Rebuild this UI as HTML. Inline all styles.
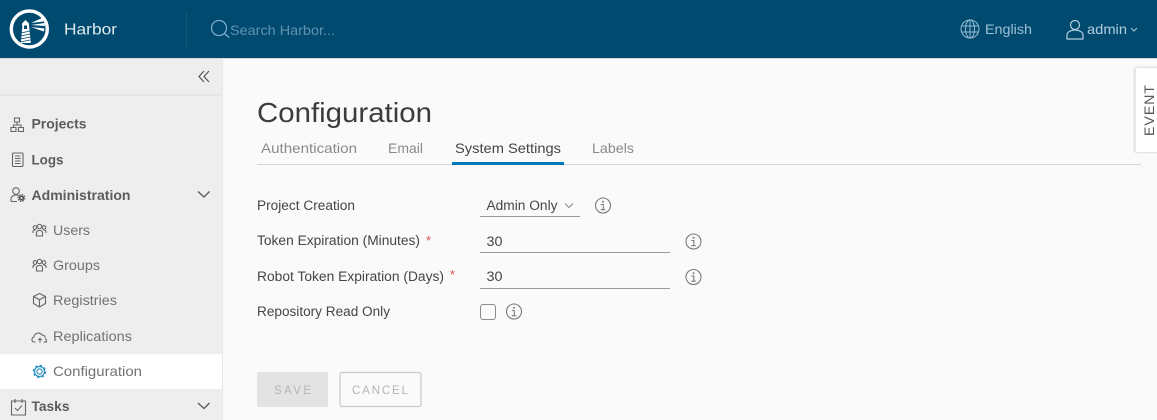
<!DOCTYPE html>
<html><head><meta charset="utf-8"><style>
html,body{margin:0;padding:0;width:1157px;height:420px;overflow:hidden;background:#fafafa}
svg{display:block;font-family:"Liberation Sans",sans-serif;filter:blur(.3px)}
.ic{fill:none;stroke:#666;stroke-width:1.1}
</style></head><body>
<svg width="1157" height="420" viewBox="0 0 1157 420" xmlns="http://www.w3.org/2000/svg">
<defs><filter id="b" x="-20%" y="-20%" width="140%" height="140%"><feGaussianBlur stdDeviation="1.2"/></filter></defs>
<rect width="1157" height="420" fill="#fafafa"/>
<!-- header -->
<rect width="1157" height="58" fill="#004a70"/>
<rect y="58" width="1157" height="1" fill="#d8d8d8"/>
<circle cx="29.300" cy="29" r="18" fill="none" stroke="#fff" stroke-width="3.400"/>
<path d="M22.500 25h6.500l1.800 18h-10z" fill="#fff"/><path d="M25.500 20l3.500 3.500v2h-7v-2z" fill="#fff"/><rect x="24" y="25.500" width="3" height="3.500" fill="#004a70"/>
<path d="M21 33l9-2M20.700 36l9.500-2M20.500 39l10-2M20.300 42l10-2" stroke="#004a70" stroke-width=".8"/>
<path d="M31 23l11-5 1.500 3.500zM31 25l13.500-2 .5 3zM31 27l13.500 1.500-.8 3z" fill="#fff"/>
<text x="64" y="34.500" font-size="16" fill="#fff" fill-opacity=".88" textLength="53" lengthAdjust="spacingAndGlyphs">Harbor</text>
<rect x="186" y="12" width="1" height="36" fill="#135879"/>
<circle cx="219" cy="28" r="7.500" fill="none" stroke="#7eb0cc" stroke-width="1.200"/><path d="M224.500 33.500l4.500 4" stroke="#7eb0cc" stroke-width="1.200"/>
<text x="230" y="35" font-size="14" fill="#5f93b0" textLength="105" lengthAdjust="spacingAndGlyphs">Search Harbor...</text>
<g fill="none" stroke="#94bbd1" stroke-width="1"><circle cx="970" cy="29" r="9"/><ellipse cx="970" cy="29" rx="4.500" ry="9"/><path d="M961.500 26h17M961.500 32h17M970 20v18"/></g>
<text x="985" y="34" font-size="14" fill="#9cc0d5" textLength="47" lengthAdjust="spacingAndGlyphs">English</text>
<g fill="none" stroke="#b5d0e0" stroke-width="1.200"><circle cx="1075" cy="25" r="4.500"/><path d="M1067 39v-4c0-3 4-5 8-5s8 2 8 5v4z"/></g>
<text x="1087" y="34" font-size="14" fill="#b0cddd" textLength="40" lengthAdjust="spacingAndGlyphs">admin</text>
<path d="M1131 28l3 3 3-3" fill="none" stroke="#a9cadd" stroke-width="1"/>
<!-- sidebar -->
<rect y="59" width="222" height="361" fill="#eeeeee"/>
<rect x="222" y="59" width="1" height="361" fill="#e8e8e8"/>
<rect y="94.500" width="222" height="1" fill="#dcdcdc"/>
<path d="M204 71l-5 5.500 5 5.500M209 71l-5 5.500 5 5.500" fill="none" stroke="#555" stroke-width="1.200"/>
<rect y="354" width="222" height="35" fill="#fff"/>
<g font-size="14" font-weight="700" fill="#5c5c5c">
<text x="31.500" y="128.500" textLength="55" lengthAdjust="spacingAndGlyphs">Projects</text>
<text x="31.500" y="164.500" textLength="32" lengthAdjust="spacingAndGlyphs">Logs</text>
<text x="31.500" y="200" textLength="99" lengthAdjust="spacingAndGlyphs">Administration</text>
<text x="31.500" y="411" textLength="38" lengthAdjust="spacingAndGlyphs">Tasks</text>
</g>
<g font-size="14" fill="#727272">
<text x="53" y="235" textLength="37" lengthAdjust="spacingAndGlyphs">Users</text>
<text x="53" y="270" textLength="47" lengthAdjust="spacingAndGlyphs">Groups</text>
<text x="53" y="305" textLength="64" lengthAdjust="spacingAndGlyphs">Registries</text>
<text x="53" y="341" textLength="79" lengthAdjust="spacingAndGlyphs">Replications</text>
<text x="53" y="376" textLength="89" lengthAdjust="spacingAndGlyphs">Configuration</text>
</g>
<!-- sidebar icons -->
<g class="ic">
<path d="M14.500 118h5v4h-5zM11 127.500h5v4h-5zM18.500 127.500h5v4h-5zM17 122v3M13.500 127.500v-2.500h7.500v2.500"/>
<rect x="12.500" y="153" width="10.500" height="13.500" rx="1"/><path d="M15 156h5.500M15 158.500h5.500M15 161h5.500M15 163.500h5.500"/>
<circle cx="16" cy="191" r="3.300"/><path d="M11 201.500v-2.500c0-2.500 2.500-4 5-4 1 0 2 .2 3 .7M11 201.500h6"/>
<path d="M198 191.500l6 5.500 5.500-5.500" stroke-width="1.300" stroke="#555"/>
<path d="M198 403l6 5.500 5.500-5.500" stroke-width="1.300" stroke="#555"/>
<path d="M11.500 401h14v14h-14zM15 399v4M22 399v4M15 408l2.500 2.500 4.500-5"/>
<g id="u"><circle cx="39.500" cy="226.500" r="2.200"/><circle cx="35" cy="227.500" r="1.800"/><circle cx="44" cy="227.500" r="1.800"/><path d="M36.500 236v-3.500c0-1 1-2 3-2s3 1 3 2v3.500zM33 233v-1.500c0-1 1-1.500 2.500-1.500M46 233v-1.500c0-1-1-1.500-2.500-1.500"/></g>
<use href="#u" y="35"/>
<path d="M39.500 293.500l6 3v7l-6 3.500-6-3.500v-7zM33.500 296.500l6 3.200 6-3.200M39.500 299.700v7"/>
<path d="M35.500 342h-1.500c-3 0-2.500-4.500 0-5 0-3 5-6 8-2 2 0 3 1 3 2.500M43.500 342h3c0-2-.5-3-1-4M39.500 342h1M40 337.500v4M38 339.500h4"/>
</g>
<g fill="none" stroke="#2f93bf"><circle cx="39.500" cy="371.500" r="2.600" stroke-width="1.200"/><circle cx="39.500" cy="371.500" r="5" stroke-width="1.200"/><circle cx="39.500" cy="371.500" r="5.900" stroke-width="1.600" stroke-dasharray="2.320 2.320"/></g>
<circle cx="21.500" cy="198" r="2.800" fill="#555"/><circle cx="21.500" cy="198" r="1" fill="#eee"/><circle cx="21.500" cy="198" r="3.500" fill="none" stroke="#555" stroke-width="1" stroke-dasharray="1.500 1.250"/>
<!-- event tab -->
<rect x="1135" y="68" width="26" height="84" fill="#000" opacity=".25" filter="url(#b)"/>
<rect x="1135.500" y="68" width="22" height="84" fill="#fff"/>
<text transform="translate(1154 136) rotate(-90)" font-size="14" fill="#565656" textLength="51" lengthAdjust="spacing">EVENT</text>
<!-- main -->
<text x="257" y="122" font-size="28" fill="#3c3c3c" textLength="175" lengthAdjust="spacingAndGlyphs">Configuration</text>
<g font-size="14" fill="#8a8a8a">
<text x="261" y="153" textLength="96" lengthAdjust="spacingAndGlyphs">Authentication</text>
<text x="388" y="153" textLength="35" lengthAdjust="spacingAndGlyphs">Email</text>
<text x="592" y="153" textLength="42" lengthAdjust="spacingAndGlyphs">Labels</text>
</g>
<text x="455" y="153" font-size="14" fill="#454545" textLength="106" lengthAdjust="spacingAndGlyphs">System Settings</text>
<rect x="257" y="164" width="884" height="1" fill="#d4d4d4"/>
<rect x="452" y="162" width="112" height="3" fill="#0079b8"/>
<g font-size="13.500" fill="#454545">
<text x="257" y="210" textLength="98" lengthAdjust="spacingAndGlyphs">Project Creation</text>
<text x="257" y="245" textLength="163" lengthAdjust="spacingAndGlyphs">Token Expiration (Minutes)</text>
<text x="257" y="281" textLength="187" lengthAdjust="spacingAndGlyphs">Robot Token Expiration (Days)</text>
<text x="257" y="316" textLength="133" lengthAdjust="spacingAndGlyphs">Repository Read Only</text>
<text x="486.500" y="210" textLength="71" lengthAdjust="spacingAndGlyphs">Admin Only</text>
<text x="486.500" y="246" textLength="16" lengthAdjust="spacingAndGlyphs">30</text>
<text x="486.500" y="281" textLength="16" lengthAdjust="spacingAndGlyphs">30</text>
</g>
<text x="426" y="245" font-size="13" fill="#d9534f">*</text>
<text x="450" y="279" font-size="13" fill="#d9534f">*</text>
<path d="M565 203.500l4 4 4-4" fill="none" stroke="#888" stroke-width="1"/>
<rect x="480" y="216" width="100" height="1" fill="#999"/>
<rect x="480" y="252" width="190" height="1" fill="#999"/>
<rect x="480" y="288" width="190" height="1" fill="#999"/>
<g id="i"><circle cx="603" cy="205.500" r="7.500" fill="none" stroke="#7a7a7a" stroke-width="1.100"/><circle cx="603" cy="201.800" r="1" fill="#7a7a7a"/><path d="M600.800 204.500h2.500v5.200M600.800 209.700h4.500" fill="none" stroke="#7a7a7a" stroke-width="1.100"/></g>
<use href="#i" x="90.500" y="36"/>
<use href="#i" x="90.500" y="71.500"/>
<use href="#i" x="-89" y="106"/>
<rect x="480.500" y="304.500" width="15" height="15" rx="2.500" fill="#fbfbfb" stroke="#8a8a8a" stroke-width="1"/>
<rect x="257" y="372" width="71" height="35" rx="2" fill="#e3e3e3"/>
<text x="274" y="394" font-size="11.500" fill="#b5b5b5" textLength="37" lengthAdjust="spacing">SAVE</text>
<rect x="340" y="372.500" width="81" height="34" rx="2" fill="#fafafa" stroke="#c9c9c9" stroke-width="1.200"/>
<text x="352" y="394" font-size="11.500" fill="#b5b5b5" textLength="56" lengthAdjust="spacing">CANCEL</text>
</svg>
</body></html>
